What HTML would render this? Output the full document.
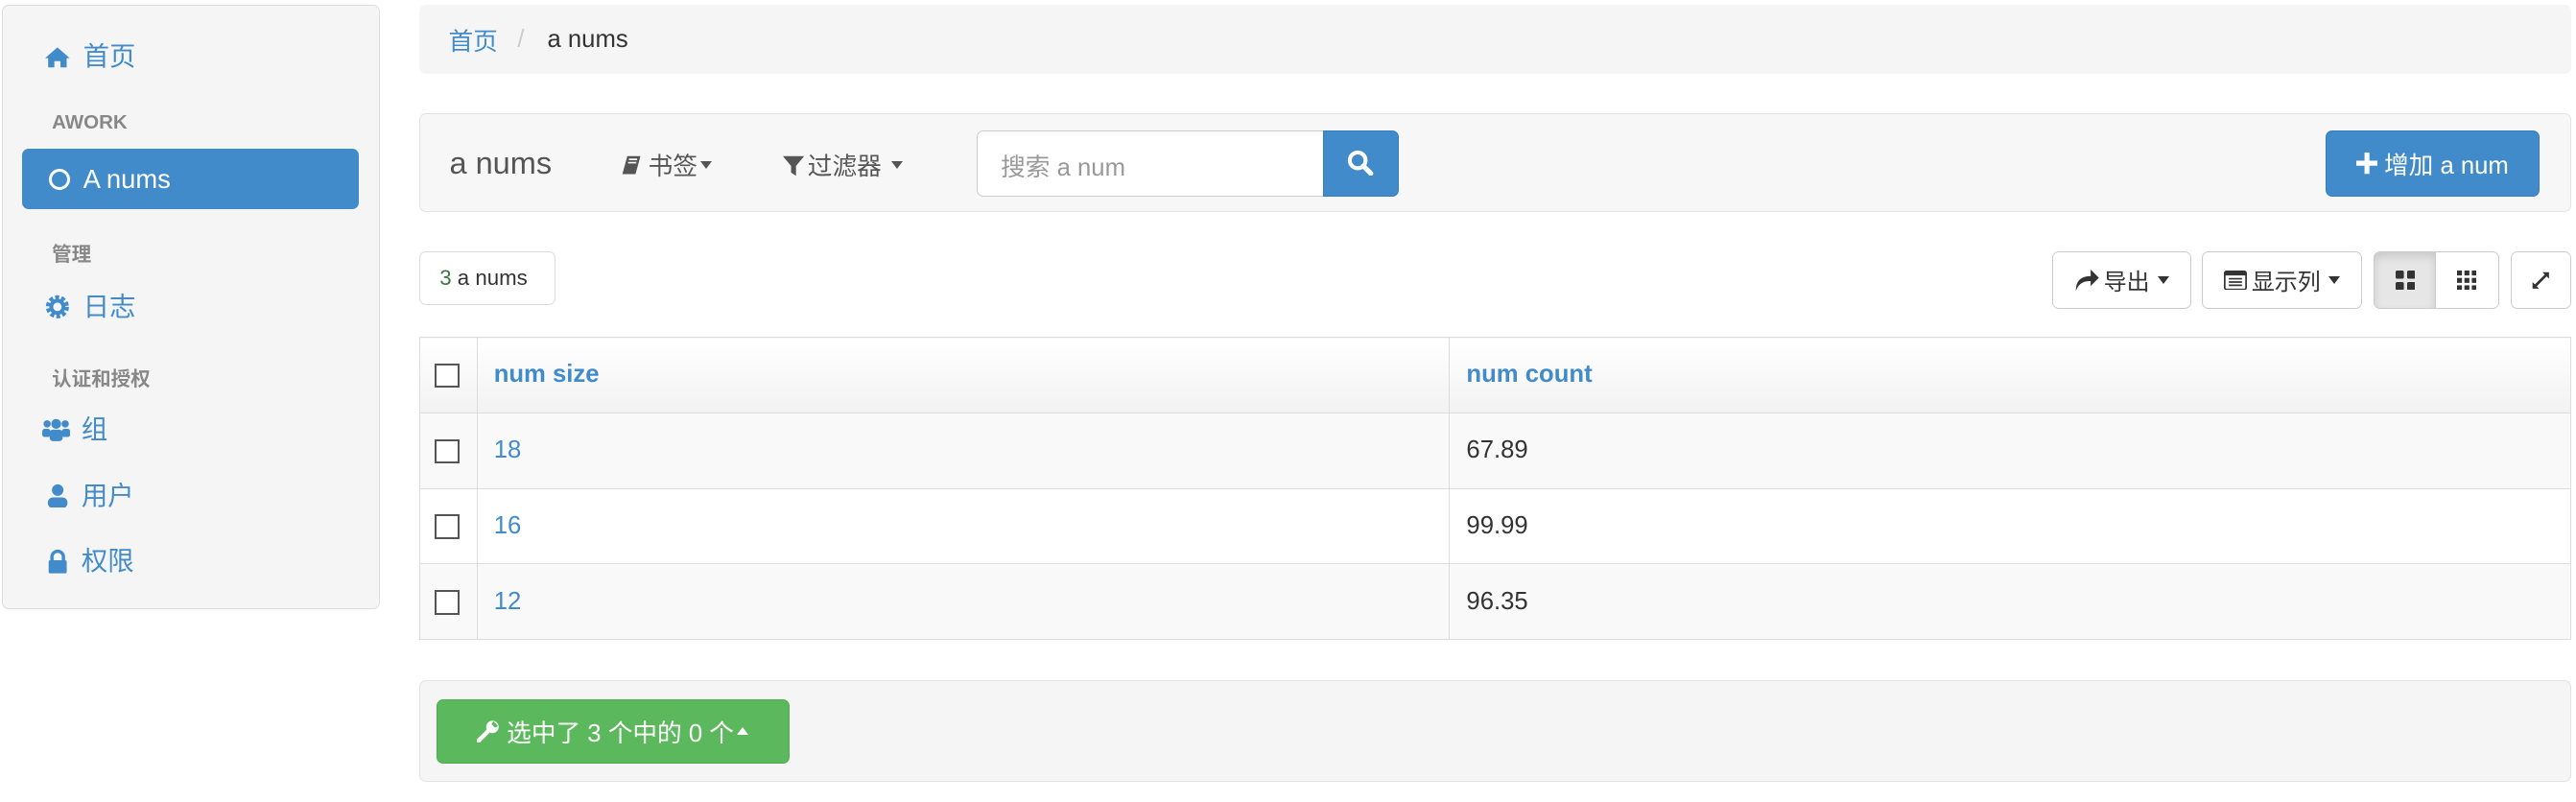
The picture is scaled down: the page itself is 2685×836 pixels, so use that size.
<!DOCTYPE html>
<html><head><meta charset="utf-8"><style>
html{zoom:1.7124}
*{box-sizing:border-box}
body{margin:0;width:1568px;height:488px;overflow:hidden;background:#fff;font-family:"Liberation Sans","Noto Sans CJK SC",sans-serif;font-size:14px;color:#333;position:relative}
.abs{position:absolute}
.side{left:1px;top:3px;width:230px;height:368px;background:#f5f5f5;border:1px solid #ddd;border-radius:4px}
.item{position:absolute;left:26px;font-size:16px;color:#428bca;display:flex;align-items:center;gap:8px;line-height:22px}
.hdr{position:absolute;left:30px;font-size:12px;font-weight:bold;color:#888}
.act{position:absolute;left:12px;top:87px;width:205px;height:37px;background:#428bca;border-radius:4px;color:#fff;font-size:16px;display:flex;align-items:center;padding-left:16px;gap:8px}
.panel{background:#f5f5f5;border-radius:4px}
.btn{position:absolute;top:153px;height:35px;border:1px solid #ccc;border-radius:4px;background:#fff;display:flex;align-items:center;justify-content:center;font-size:14px;gap:3px}
.caret{display:inline-block;border-left:4px solid transparent;border-right:4px solid transparent;border-top:5px solid #333;margin-left:2px}
table{position:absolute;left:255px;top:205px;width:1310px;border-collapse:collapse;font-size:15px}
td,th{border:1px solid #ddd;height:46px;padding:0 10px;text-align:left}
th{background:linear-gradient(#fff,#f2f2f2);color:#428bca;font-weight:bold;height:46px}
tr.o td{background:#f9f9f9}
.cb{width:15px;height:15px;border:1.5px solid #555;display:inline-block;vertical-align:middle;background:#fff}
a{color:#428bca}
.row{display:flex;align-items:center}
</style></head><body>
<div class="abs side">
 <div class="item" style="top:20px"><svg width="15" height="14" viewBox="0 0 16 14"><path d="M8 1L0 8h2v6h4V10h4v4h4V8h2z" fill="#428bca"/></svg>首页</div>
 <div class="hdr" style="top:64px">AWORK</div>
 <div class="act"><span style="width:13px;height:13px;border:2px solid #fff;border-radius:50%;display:inline-block"></span>A nums</div>
 <div class="hdr" style="top:141px">管理</div>
 <div class="item" style="top:172px"><svg width="15" height="15" viewBox="0 0 16 16"><circle cx="8" cy="8" r="5.5" fill="none" stroke="#428bca" stroke-width="4" stroke-dasharray="2.2 1.3"/><circle cx="8" cy="8" r="4" fill="none" stroke="#428bca" stroke-width="2.5"/></svg>日志</div>
 <div class="hdr" style="top:217px">认证和授权</div>
 <div class="item" style="top:247px;left:24px;gap:7px"><svg width="17" height="15" viewBox="0 0 17 15"><circle cx="8.5" cy="4" r="3" fill="#428bca"/><circle cx="3" cy="4" r="2.2" fill="#428bca"/><circle cx="14" cy="4" r="2.2" fill="#428bca"/><rect x="4.5" y="7.5" width="8" height="7" rx="2" fill="#428bca"/><rect x="0" y="7" width="5" height="5" rx="1.5" fill="#428bca"/><rect x="12" y="7" width="5" height="5" rx="1.5" fill="#428bca"/></svg>组</div>
 <div class="item" style="top:287px;left:27px"><svg width="13" height="15" viewBox="0 0 13 15"><circle cx="6.5" cy="4" r="3.5" fill="#428bca"/><rect x="0.5" y="8.5" width="12" height="6.5" rx="3" fill="#428bca"/></svg>用户</div>
 <div class="item" style="top:327px;left:27px"><svg width="13" height="15" viewBox="0 0 13 15"><path d="M3 7V5a3.5 3.5 0 0 1 7 0v2" fill="none" stroke="#428bca" stroke-width="2"/><rect x="1" y="7" width="11" height="8" rx="1" fill="#428bca"/></svg>权限</div>
</div>

<div class="abs panel row" style="left:255px;top:3px;width:1310px;height:42px;font-size:15px;padding-left:18px">
 <span style="color:#428bca">首页</span>
 <span style="color:#ccc;margin:0 14px 0 12px">/</span>
 <span>a nums</span>
</div>

<div class="abs" style="left:255px;top:69px;width:1310px;height:60px;background:#f7f7f7;border:1px solid #e3e3e3;border-radius:4px">
 <span class="abs" style="left:18px;top:19px;font-size:19px;color:#555">a nums</span>
 <span class="abs row" style="left:122px;top:20px;font-size:15px;color:#555"><svg width="13" height="13" viewBox="0 0 13 13" style="margin-right:4px"><path d="M4 1h8l-3 11H1z" fill="#555"/><path d="M5 3h5M4.5 5h5" stroke="#f7f7f7"/></svg>书签<span class="caret" style="border-top-color:#555"></span></span>
 <span class="abs row" style="left:221px;top:20px;font-size:15px;color:#555"><svg width="13" height="13" viewBox="0 0 13 13" style="margin-right:2px"><path d="M0 1h13L8 7v6L5 11V7z" fill="#555"/></svg>过滤器 <span class="caret" style="border-top-color:#555;margin-left:6px"></span></span>
 <div class="abs" style="left:339px;top:10px;width:212px;height:40px;background:#fff;border:1px solid #ccc;border-radius:4px 0 0 4px;padding:10px 14px;font-size:15px;color:#999">搜索 a num</div>
 <div class="abs" style="left:550px;top:10px;width:46px;height:40px;background:#428bca;border:1px solid #357ebd;border-radius:0 4px 4px 0"><svg class="abs" style="left:14px;top:11px" width="16" height="16" viewBox="0 0 16 16"><circle cx="6.5" cy="6.5" r="4.8" fill="none" stroke="#fff" stroke-width="2.4"/><path d="M10 10l4.5 4.5" stroke="#fff" stroke-width="3" stroke-linecap="round"/></svg></div>
 <div class="abs" style="left:1160px;top:10px;width:130px;height:40px;background:#428bca;border:1px solid #357ebd;border-radius:4px;color:#fff;font-size:15px;display:flex;align-items:center;justify-content:center"><svg width="13" height="13" viewBox="0 0 13 13" style="margin-right:4px"><path d="M5 0h3v5h5v3H8v5H5V8H0V5h5z" fill="#fff"/></svg>增加 a num</div>
</div>

<div class="abs" style="left:255px;top:153px;width:83px;height:33px;border:1px solid #ddd;border-radius:4px;font-size:13px;padding:8px 12px"><span style="color:#3c763d">3</span> a nums</div>

<div class="btn" style="left:1249px;width:85px"><svg width="15" height="13" viewBox="0 0 15 13"><path d="M1 13C1 6 5 4 10 4V0l5 5-5 5V7C6 7 3 8 1 13z" fill="#333"/></svg>导出<span class="caret"></span></div>
<div class="btn" style="left:1340px;width:98px"><svg width="14" height="12" viewBox="0 0 14 12"><rect x="0.5" y="0.5" width="13" height="11" rx="1" fill="none" stroke="#333"/><rect x="0.5" y="0.5" width="13" height="2.5" fill="#333"/><path d="M3 5h8M3 7h8M3 9h8" stroke="#333"/></svg>显示列<span class="caret"></span></div>
<div class="btn" style="left:1445px;width:38px;background:#e6e6e6;border-radius:4px 0 0 4px;box-shadow:inset 0 3px 5px rgba(0,0,0,.12)"><svg width="12" height="12"><rect x="0" y="0" width="5" height="5" rx="1" fill="#333"/><rect x="7" y="0" width="5" height="5" rx="1" fill="#333"/><rect x="0" y="7" width="5" height="5" rx="1" fill="#333"/><rect x="7" y="7" width="5" height="5" rx="1" fill="#333"/></svg></div>
<div class="btn" style="left:1482px;width:39px;border-radius:0 4px 4px 0"><svg width="12" height="12"><g fill="#333"><rect x="0" y="0" width="3" height="3"/><rect x="4.5" y="0" width="3" height="3"/><rect x="9" y="0" width="3" height="3"/><rect x="0" y="4.5" width="3" height="3"/><rect x="4.5" y="4.5" width="3" height="3"/><rect x="9" y="4.5" width="3" height="3"/><rect x="0" y="9" width="3" height="3"/><rect x="4.5" y="9" width="3" height="3"/><rect x="9" y="9" width="3" height="3"/></g></svg></div>
<div class="btn" style="left:1528px;width:37px"><svg width="12" height="12" viewBox="0 0 12 12"><path d="M2 10L10 2" stroke="#333" stroke-width="1.6"/><path d="M7 1h4v4zM1 7v4h4z" fill="#333"/></svg></div>

<table>
<tr><th style="width:35px;padding:0 0 0 9px"><span class="cb"></span></th><th style="width:592px">num size</th><th>num count</th></tr>
<tr class="o"><td style="padding-left:9px"><span class="cb"></span></td><td><a>18</a></td><td>67.89</td></tr>
<tr><td style="padding-left:9px"><span class="cb"></span></td><td><a>16</a></td><td>99.99</td></tr>
<tr class="o"><td style="padding-left:9px"><span class="cb"></span></td><td><a>12</a></td><td>96.35</td></tr>
</table>

<div class="abs" style="left:255px;top:414px;width:1310px;height:62px;background:#f5f5f5;border:1px solid #e3e3e3;border-radius:4px">
 <div class="abs" style="left:10px;top:11px;width:215px;height:39px;background:#5cb85c;border:1px solid #4cae4c;border-radius:4px;color:#fff;font-size:15px;display:flex;align-items:center;justify-content:center"><svg width="14" height="14" viewBox="0 0 14 14" style="margin-right:4px"><path d="M1 13l6-6" stroke="#fff" stroke-width="2.6" stroke-linecap="round"/><circle cx="9.5" cy="4.5" r="3.8" fill="#fff"/><path d="M10 1l3 3-2 1-2-2z" fill="#5cb85c"/></svg>选中了 3 个中的 0 个 <span class="caret" style="border-top:none;border-bottom:5px solid #fff"></span></div>
</div>
</body></html>
